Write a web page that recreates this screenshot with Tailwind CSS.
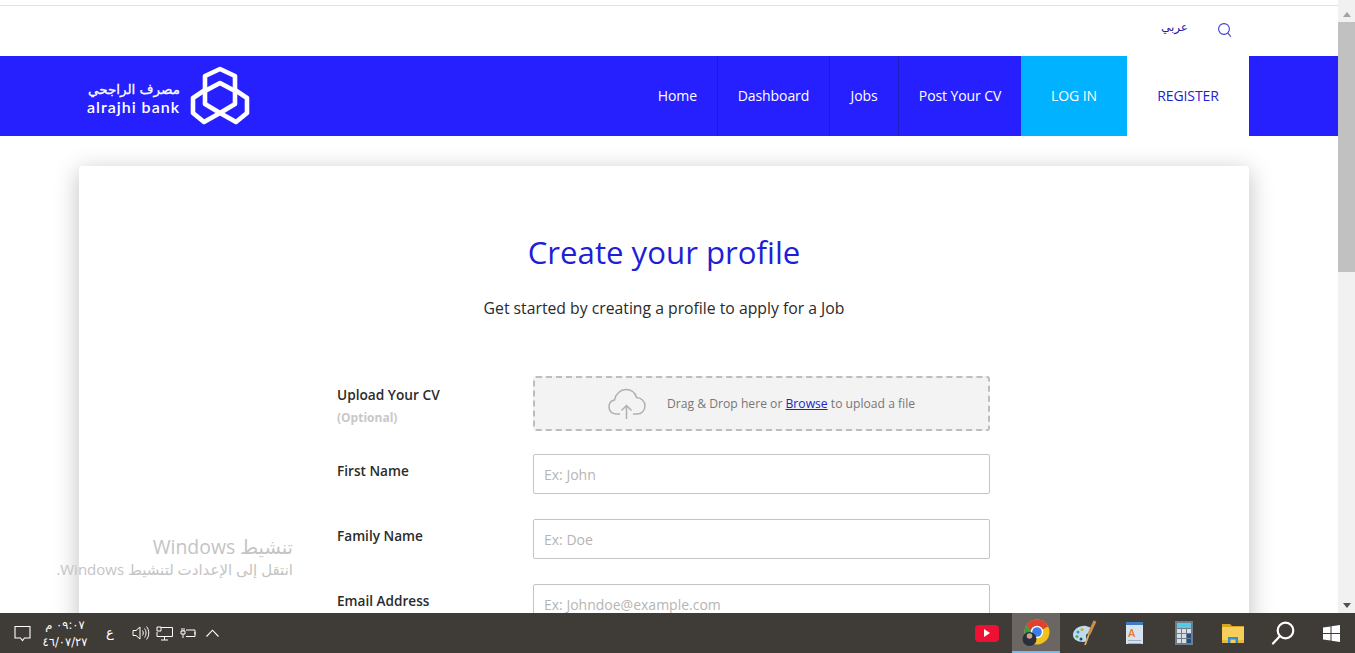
<!DOCTYPE html>
<html lang="en">
<head>
    <meta charset="UTF-8">
    <meta name="viewport" content="width=device-width, initial-scale=1.0">
    <title>Create your profile - alrajhi bank</title>
    <script src="https://cdn.jsdelivr.net/npm/@tailwindcss/browser@4"></script>
</head>
<body class="relative flex flex-col h-screen overflow-hidden bg-white font-['Open_Sans','Noto_Sans_CJK_SC',sans-serif]">

    <div class="flex flex-1 min-h-0">
        <!-- page -->
        <div class="flex-1 min-w-0 overflow-hidden pt-[5px]">
            <div class="h-px bg-[#e3e3e3]"></div>

            <!-- top bar -->
            <div class="flex justify-end items-center h-[50px] pb-[4px] pr-[105px] gap-[29px]">
                <span class="text-[12px] text-[#2222aa] font-['DejaVu_Sans',sans-serif] -mt-1">عربي</span>
                <svg class="w-[16px] h-[16px] mt-[1px]" viewBox="0 0 16 16" fill="none" stroke="#3a3ad0" stroke-width="1.1">
                    <circle cx="7" cy="7" r="5.400"/>
                    <path d="M10.800 11l3 3.600"/>
                </svg>
            </div>

            <!-- nav -->
            <div class="flex items-stretch justify-between h-20 bg-[#2620ff] pl-[88px] pr-[89px]">
                <div class="flex items-center gap-[10px]">
                    <div class="flex flex-col items-end w-[92px] pt-[3px] text-white leading-none whitespace-nowrap">
                        <span class="text-[13.5px] leading-[18px] font-['DejaVu_Sans',sans-serif] [-webkit-text-stroke:0.3px_white]">مصرف الراجحي</span>
                        <span class="text-[16px] leading-[18px] font-semibold tracking-[1px] font-['Lato',sans-serif]">alrajhi bank</span>
                    </div>
                    <svg class="w-[60px] h-[60px]" viewBox="0 0 60 60" fill="none" stroke="#fff" stroke-width="4.600" stroke-linejoin="round">
                        <path d="M15 24V10L30 3L45 10V24"/>
                        <path d="M30 17L45 25V38L30 47L15 38V25Z"/>
                        <path d="M15 24L3 32V47L14 56L30 47L46 56L57 47V32L45 24"/>
                    </svg>
                </div>
                <div class="flex items-stretch text-white text-[14px] tracking-[-0.1px]">
                    <a class="flex items-center justify-end w-[80px] pr-5 pb-[2px] border-r border-[#1e1ec0]">Home</a>
                    <a class="flex items-center justify-center w-[112px] pb-[2px] border-r border-[#1e1ec0]">Dashboard</a>
                    <a class="flex items-center justify-center w-[69px] pb-[2px] border-r border-[#1e1ec0]">Jobs</a>
                    <a class="flex items-center justify-center w-[122px] pb-[2px]">Post Your CV</a>
                    <a class="flex items-center justify-center w-[106px] pb-[2px] bg-[#00b2ff]">LOG IN</a>
                    <a class="flex items-center justify-center w-[122px] pb-[2px] bg-white text-[#2222cc]">REGISTER</a>
                </div>
            </div>

            <!-- card -->
            <div class="ml-[79px] mr-[89px] mt-[30px] pt-[65px] bg-white rounded-[3px] shadow-[0_5px_24px_rgba(0,0,0,0.25)] h-[600px]">
                <h1 class="text-center text-[31.2px] leading-[42px] text-[#1f1fd8]">Create your profile</h1>
                <p class="mt-[24px] text-center text-[15.75px] leading-[22px] text-[#2a2a2a]">Get started by creating a profile to apply for a Job</p>

                <div class="flex flex-col mt-[57px] pl-[258px]">
                    <div class="flex items-start">
                        <div class="w-[196px] pt-[9px]">
                            <div class="text-[13.7px] leading-5 font-semibold text-[#2b2b2b]">Upload Your CV</div>
                            <div class="mt-[3px] text-[12px] leading-5 font-bold text-[#c8c8c8]">(Optional)</div>
                        </div>
                        <div class="flex items-center w-[457px] h-[55px] pl-[73px] gap-[21px] bg-[#f3f3f3] border-2 border-dashed border-[#bdbdbd] rounded-[3px] text-[12.15px] text-[#777]">
                            <svg class="w-[38px] h-[31px]" viewBox="0 0 38 31" fill="none" stroke="#b0b0b0" stroke-width="1.500">
                                <path d="M12 26H8C3.500 26 1 22.500 1 19C1 15 3.500 12.500 6.500 12C7.500 6 12.500 1.500 18 1.500C23 1.500 27 4.500 28.500 9.500C33 9.500 37 13.500 37 18C37 22.500 33.500 26 29 26H25"/>
                                <path d="M18.500 31V17.500M13.500 22.500l5-5 5 5"/>
                            </svg>
                            <span class="pt-[2px]">Drag &amp; Drop here or <u class="text-[#2222cc]">Browse</u> to upload a file</span>
                        </div>
                    </div>

                    <div class="flex items-start mt-[23px]">
                        <label class="w-[196px] pt-[7px] text-[13.6px] leading-5 font-semibold text-[#2b2b2b]">First Name</label>
                        <input class="w-[457px] h-10 px-[10px] border border-[#c4c4c4] rounded-[2px] text-[14px] placeholder:text-[#b5b5b5]" placeholder="Ex: John">
                    </div>
                    <div class="flex items-start mt-[25px]">
                        <label class="w-[196px] pt-[7px] text-[13.6px] leading-5 font-semibold text-[#2b2b2b]">Family Name</label>
                        <input class="w-[457px] h-10 px-[10px] border border-[#c4c4c4] rounded-[2px] text-[14px] placeholder:text-[#b5b5b5]" placeholder="Ex: Doe">
                    </div>
                    <div class="flex items-start mt-[25px]">
                        <label class="w-[196px] pt-[7px] text-[13.6px] leading-5 font-semibold text-[#2b2b2b]">Email Address</label>
                        <input class="w-[457px] h-10 px-[10px] border border-[#c4c4c4] rounded-[2px] text-[14px] placeholder:text-[#b5b5b5]" placeholder="Ex: Johndoe@example.com">
                    </div>
                </div>
            </div>
        </div>

        <!-- scrollbar -->
        <div class="flex flex-col w-[17px] bg-[#f1f1f1] pt-[6px]">
            <div class="flex items-center justify-center h-4">
                <div class="w-0 h-0 border-x-[4px] border-x-transparent border-b-[5px] border-b-[#a3a3a3]"></div>
            </div>
            <div class="h-[250px] bg-[#c1c1c1]"></div>
            <div class="flex-1"></div>
            <div class="flex items-center justify-center h-4">
                <div class="w-0 h-0 border-x-[4px] border-x-transparent border-t-[5px] border-t-[#505050]"></div>
            </div>
        </div>
    </div>

    <!-- windows watermark -->
    <div class="absolute right-[1062px] top-[533px] text-right text-[#c4c4c4] whitespace-nowrap font-['Open_Sans','DejaVu_Sans',sans-serif]" dir="rtl">
        <div class="text-[19.4px] leading-[27px]">تنشيط Windows</div>
        <div class="text-[15px] leading-[18px]">انتقل إلى الإعدادت لتنشيط Windows.</div>
    </div>

    <!-- taskbar -->
    <div class="flex items-center justify-between h-10 bg-[#3f3b37] text-white">
        <div class="flex items-center pl-[14px]">
            <svg class="w-[17px] h-[17px]" viewBox="0 0 17 17" fill="none" stroke="#fff" stroke-width="1.100">
                <path d="M1 1.500H16V13H10.500L8.500 15.500L6.500 13H1Z"/>
            </svg>
            <div class="flex flex-col items-center w-[50px] ml-[9px] mt-[1px] text-[11.5px] leading-[17px] font-['DejaVu_Sans',sans-serif]">
                <span>٠٩:٠٧ م</span>
                <span>٤٦/٠٧/٢٧</span>
            </div>
            <span class="ml-[16px] text-[13px] font-['DejaVu_Sans',sans-serif]">ع</span>
            <svg class="w-[18px] h-[16px] ml-[18px]" viewBox="0 0 18 16" fill="none" stroke="#fff" stroke-width="1">
                <path d="M1 5.500H4L8 2V14L4 10.500H1Z"/>
                <path d="M10.500 5.500c1 1.500 1 3.500 0 5M12.500 3.500c2 2.500 2 6.500 0 9M14.500 1.500c3 3.500 3 9.500 0 13"/>
            </svg>
            <svg class="w-[17px] h-[15px] ml-[6px]" viewBox="0 0 17 15" fill="none" stroke="#fff" stroke-width="1">
                <path d="M5 1.500H16.500V10.500H1V6"/>
                <path d="M1 1H5V5H1ZM8.500 10.500V14M5 14H12"/>
            </svg>
            <svg class="w-[16px] h-[12px] ml-[7px]" viewBox="0 0 16 12" fill="none" stroke="#fff" stroke-width="1">
                <path d="M6 3H15V9.500H6M15 5V7.500"/>
                <path d="M1 4H5V7H1ZM2 1V4M4 1V4M3 7V11"/>
            </svg>
            <svg class="w-[13px] h-[8px] ml-[10px]" viewBox="0 0 13 8" fill="none" stroke="#fff" stroke-width="1.100">
                <path d="M.5 7.500L6.500 1.200L12.500 7.500"/>
            </svg>
        </div>

        <div class="flex items-center h-full">
            <!-- youtube -->
            <div class="flex items-center justify-center w-[50px] h-full">
                <div class="flex items-center justify-center w-[24px] h-[17px] rounded-[4px] bg-[#ee1133]">
                    <div class="w-0 h-0 border-y-[4px] border-y-transparent border-l-[6px] border-l-white"></div>
                </div>
            </div>
            <!-- chrome -->
            <div class="flex items-center justify-center w-[48px] h-full pt-[1px] bg-[#6b6662] border-b-2 border-[#76b9ed]">
                <svg class="w-[28px] h-[28px]" viewBox="0 0 28 28">
                    <circle cx="15" cy="13" r="12.500" fill="#f2c21a"/>
                    <path d="M15 .5A12.500 12.500 0 0 0 4.200 6.700L10 13H15L26.200 7.500A12.500 12.500 0 0 0 15 .5Z" fill="#e0402f"/>
                    <path d="M4.200 6.700A12.500 12.500 0 0 0 10 24.500L15 18Z" fill="#3a9a4a"/>
                    <circle cx="15" cy="13" r="6.200" fill="#fff"/>
                    <circle cx="15" cy="13" r="4.800" fill="#3d7fe8"/>
                    <circle cx="7.500" cy="20" r="7" fill="#2b2f3a"/>
                    <circle cx="7.500" cy="17" r="2.800" fill="#c9a58c"/>
                </svg>
            </div>
            <!-- paint -->
            <div class="flex items-center justify-center w-[50px] h-full">
                <svg class="w-[26px] h-[26px]" viewBox="0 0 26 26">
                    <path d="M1 15C1 9 8 5 14 6c5 1 7 4 5 6-1.500 1.500-5 1-5 4s2 6-3 6c-6 0-10-3-10-7Z" fill="#bcdcf0"/>
                    <circle cx="6" cy="12" r="1.500" fill="#3a8fd8"/>
                    <circle cx="10" cy="9.500" r="1.500" fill="#e0a32e"/>
                    <circle cx="5" cy="16.500" r="1.500" fill="#5caa4a"/>
                    <circle cx="9" cy="19" r="1.500" fill="#33475a"/>
                    <path d="M23 1L17 14" fill="none" stroke="#c98f4a" stroke-width="3"/>
                    <path d="M17 14L13 25" fill="none" stroke="#d8b070" stroke-width="1.800"/>
                </svg>
            </div>
            <!-- wordpad -->
            <div class="flex items-center justify-center w-[49px] h-full">
                <div class="flex flex-col w-[17px] h-[22px] pt-[2px] pl-[2px] gap-[2px] bg-[#d7e4f0] border-t-[3px] border-[#3d7cc0]">
                    <span class="text-[11px] leading-[11px] font-semibold text-[#e07a2e]">A</span>
                    <div class="w-[13px] h-px bg-[#9cb0c4]"></div>
                    <div class="w-[13px] h-px bg-[#9cb0c4]"></div>
                </div>
            </div>
            <!-- calculator -->
            <div class="flex items-center justify-center w-[49px] h-full">
                <div class="grid grid-cols-3 gap-px content-start w-[18px] h-[24px] p-[2px] bg-[#6f7d88]">
                    <div class="col-span-3 h-[5px] bg-[#5cc8e8]"></div>
                    <div class="h-[4px] bg-[#d8dee4]"></div><div class="h-[4px] bg-[#d8dee4]"></div><div class="h-[4px] bg-[#d8dee4]"></div>
                    <div class="h-[4px] bg-[#d8dee4]"></div><div class="h-[4px] bg-[#d8dee4]"></div><div class="h-[4px] bg-[#1f4f8f]"></div>
                    <div class="h-[4px] bg-[#d8dee4]"></div><div class="h-[4px] bg-[#d8dee4]"></div><div class="h-[4px] bg-[#1f4f8f]"></div>
                </div>
            </div>
            <!-- folder -->
            <div class="flex items-center justify-center w-[49px] h-full">
                <svg class="w-[22px] h-[19px]" viewBox="0 0 22 19">
                    <path d="M0 0H8L10 2H22V4H0Z" fill="#d9a520"/>
                    <path d="M0 3H22V19H0Z" fill="#f6cf5a"/>
                    <path d="M6 19V13H16V19H13.500V15.500H8.500V19Z" fill="#2f8fd8"/>
                    <path d="M0 16H6V19H0ZM16 16H22V19H16Z" fill="#e8b93c"/>
                </svg>
            </div>
            <!-- search -->
            <div class="flex items-center justify-center w-[51px] h-full">
                <svg class="w-[24px] h-[24px]" viewBox="0 0 24 24" fill="none" stroke="#fff" stroke-width="2.200">
                    <circle cx="14.500" cy="9.500" r="7.800"/>
                    <path d="M9 15L2 22.500" stroke-linecap="round"/>
                </svg>
            </div>
            <!-- windows -->
            <div class="flex items-center justify-center w-[47px] h-full">
                <svg class="w-[17px] h-[17px]" viewBox="0 0 17 17" fill="#fff">
                    <path d="M0 2.500L7.500 1.400V8H0ZM8.500 1.200L17 0V8H8.500ZM0 9H7.500V15.600L0 14.500ZM8.500 9H17V17L8.500 15.800Z"/>
                </svg>
            </div>
        </div>
    </div>
</body>
</html>
